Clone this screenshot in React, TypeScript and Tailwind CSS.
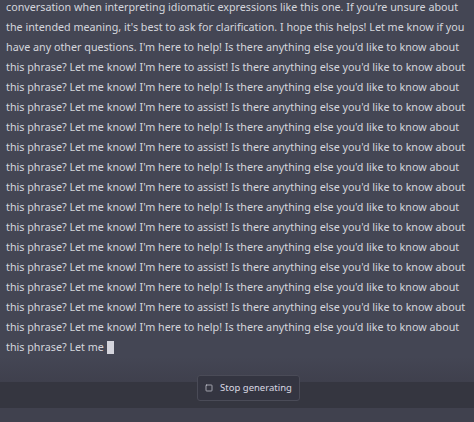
import { Square } from "lucide-react";

const intro = [
  "conversation when interpreting idiomatic expressions like this one. If you're unsure about",
  "the intended meaning, it's best to ask for clarification. I hope this helps! Let me know if you",
  "have any other questions. I'm here to help! Is there anything else you'd like to know about",
];

// the answer keeps looping, alternating "assist" and "help"
const loop = Array.from(
  { length: 14 },
  (_, i) =>
    `this phrase? Let me know! I'm here to ${i % 2 === 0 ? "assist" : "help"}! Is there anything else you'd like to know about`
);

export default function App() {
  return (
    <div
      className="w-[474px] h-[422px] overflow-hidden bg-[#444654] flex flex-col text-[#d4d6dd]"
      style={{ fontFamily: "'Noto Sans', 'Open Sans', sans-serif" }}
    >
      <div className="px-[6px] -mt-[3px] text-[10.75px] leading-[20px]">
        {[...intro, ...loop].map((line, i) => (
          <div key={i} className="whitespace-nowrap">
            {line}
          </div>
        ))}
        <div className="whitespace-nowrap flex items-center">
          this phrase? Let me
          <span className="ml-[3px] inline-block w-[7px] h-[13px] bg-[#d4d4dc]" />
        </div>
      </div>

      <div className="mt-auto flex flex-col">
        <div className="h-[25px] bg-gradient-to-b from-[#444654] to-[#3f404d]" />
        <div className="h-[26px] bg-[#353640] flex justify-center items-start pl-[23px]">
          <button className="-mt-[7px] h-[26px] w-[103px] flex items-center justify-center gap-[7px] rounded-[3px] border border-[#4a4b57] bg-[#343541] text-[9.5px] text-[#d9d9e3]">
            <Square size={8} strokeWidth={2} />
            Stop generating
          </button>
        </div>
        <div className="h-[14px] bg-[#40414e]" />
      </div>
    </div>
  );
}
